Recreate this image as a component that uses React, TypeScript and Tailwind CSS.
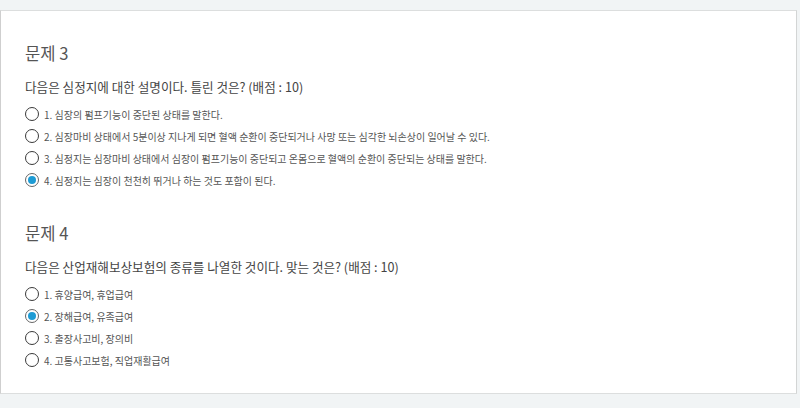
const questions = [
  {
    title: "문제 3",
    text: "다음은 심정지에 대한 설명이다. 틀린 것은? (배점 : 10)",
    options: [
      "1. 심장의 펌프기능이 중단된 상태를 말한다.",
      "2. 심장마비 상태에서 5분이상 지나게 되면 혈액 순환이 중단되거나 사망 또는 심각한 뇌손상이 일어날 수 있다.",
      "3. 심정지는 심장마비 상태에서 심장이 펌프기능이 중단되고 온몸으로 혈액의 순환이 중단되는 상태를 말한다.",
      "4. 심정지는 심장이 천천히 뛰거나 하는 것도 포함이 된다.",
    ],
    selected: 3,
  },
  {
    title: "문제 4",
    text: "다음은 산업재해보상보험의 종류를 나열한 것이다. 맞는 것은? (배점 : 10)",
    options: [
      "1. 휴양급여, 휴업급여",
      "2. 장해급여, 유족급여",
      "3. 출장사고비, 장의비",
      "4. 고통사고보험, 직업재활급여",
    ],
    selected: 1,
  },
];

function Radio({ checked }: { checked: boolean }) {
  return (
    <span
      className={
        "flex h-[14px] w-[14px] shrink-0 items-center justify-center rounded-full border-[1.5px] " +
        (checked ? "border-[#666]" : "border-[#3a3a3a]")
      }
    >
      {checked && <span className="h-[8px] w-[8px] rounded-full bg-[#1e9bd4]" />}
    </span>
  );
}

export default function App() {
  return (
    <div
      className="h-[408px] w-[800px] bg-[#f1f4f5] pt-[10px]"
      style={{ fontFamily: '"Noto Sans CJK KR", "Noto Sans", sans-serif' }}
    >
      <div className="h-[384px] w-[797px] border-y border-r border-l border-y-[#dcdede] border-r-[#d3d5d5] border-l-[#cfcfcf] border-l-dotted bg-white pl-[24px] pt-[30px]">
        {questions.map((q, i) => (
          <div key={q.title} className={i > 0 ? "mt-[30px]" : ""}>
            <h2 className="text-[16.6px] leading-[24px] font-normal text-[#555]">{q.title}</h2>
            <p className="mt-[13px] text-[12.6px] leading-[18px] font-normal text-[#444]">{q.text}</p>
            <ul className="mt-[7px]">
              {q.options.map((o, j) => (
                <li key={j} className="flex h-[22px] items-center gap-[5px]">
                  <Radio checked={j === q.selected} />
                  <span className="text-[10px] text-[#555]">{o}</span>
                </li>
              ))}
            </ul>
          </div>
        ))}
      </div>
    </div>
  );
}
